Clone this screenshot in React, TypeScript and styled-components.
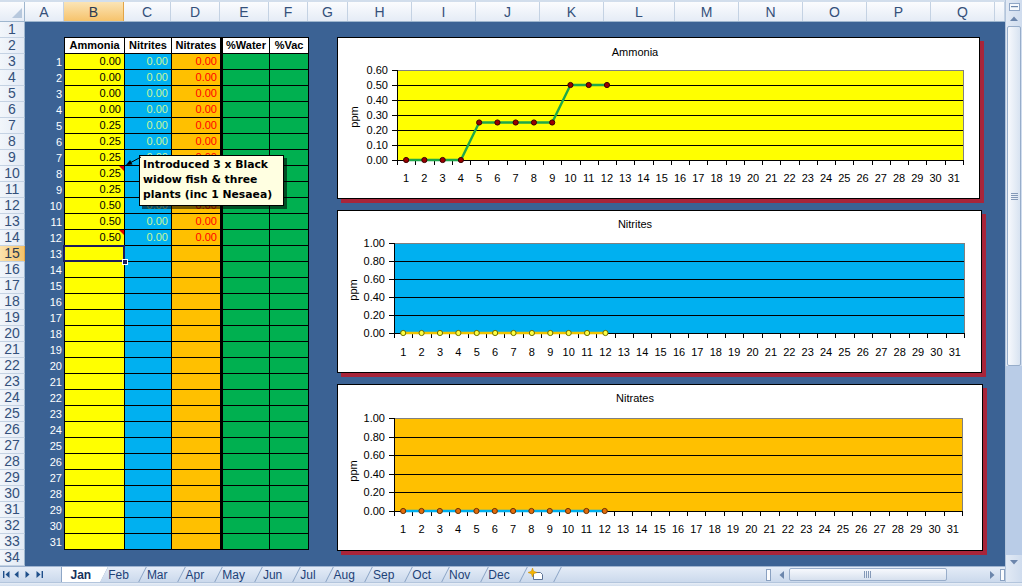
import React from "react";
import styled, { createGlobalStyle, css } from "styled-components";

const GlobalStyle = createGlobalStyle`
  html, body { margin: 0; padding: 0; background: #ffffff; overflow: hidden; }
  body { font-family: "Liberation Sans", Arial, sans-serif; }
  #root { width: 1022px; height: 586px; }
`;

const SHEET = "#3b6294";
const HEAD_LINE = "#9eb6ce";
const SOFT_LINE = "#c4d2e3";

/* ---------- window frame ---------- */
const Window = styled.div`
  width: 1022px;
  height: 586px;
  display: flex;
  flex-direction: column;
  overflow: hidden;
  background: #dbe5f2;
`;
const Upper = styled.div`
  display: flex;
  height: 582px;
  flex: none;
`;
const Workbook = styled.div`
  width: 1005px;
  flex: none;
  display: flex;
  flex-direction: column;
`;
const StatusStrip = styled.div`
  height: 4px;
  flex: none;
  box-sizing: border-box;
  border-top: 1px solid #b3c5dc;
  background: linear-gradient(#e8eef7, #d3dfee);
`;

/* ---------- column header ---------- */
const ColumnHeader = styled.div`
  display: flex;
  height: 22px;
  flex: none;
  box-sizing: border-box;
  border-top: 2px solid #d2deec;
  border-bottom: 1px solid ${HEAD_LINE};
  background: linear-gradient(#fbfcfe, #e5ecf6);
`;
const SelectAll = styled.div`
  width: 25px;
  flex: none;
  box-sizing: border-box;
  border-right: 1px solid ${HEAD_LINE};
  display: flex;
`;
const ColHead = styled.div<{ $w?: number; $active?: boolean }>`
  ${(p) => (p.$w ? css`width: ${p.$w}px; flex: none;` : css`flex: 1;`)}
  box-sizing: border-box;
  border-right: 1px solid ${SOFT_LINE};
  display: flex;
  align-items: center;
  justify-content: center;
  font-size: 14px;
  color: #34507a;
  ${(p) =>
    p.$active &&
    css`
      background: linear-gradient(#fbe4b6, #f6c36c);
      border-right-color: #e2a446;
      color: #2a3a52;
    `}
`;

/* ---------- body ---------- */
const Body = styled.div`
  display: flex;
  height: 544px;
  flex: none;
`;
const RowHeaders = styled.div`
  width: 25px;
  flex: none;
  display: flex;
  flex-direction: column;
  background: linear-gradient(90deg, #f2f6fb, #e1e9f4);
`;
const RowHead = styled.div<{ $active?: boolean }>`
  height: 16px;
  flex: none;
  box-sizing: border-box;
  border-bottom: 1px solid ${SOFT_LINE};
  border-right: 1px solid ${HEAD_LINE};
  font-size: 14px;
  line-height: 15px;
  text-align: center;
  color: #34507a;
  ${(p) =>
    p.$active &&
    css`
      background: linear-gradient(90deg, #fbe2ad, #f5c26a);
      border-right-color: #e2a446;
      color: #2a3a52;
    `}
`;
const Sheet = styled.div`
  flex: 1;
  position: relative;
  display: flex;
  background: ${SHEET};
`;
const DayColumn = styled.div`
  width: 39px;
  flex: none;
  box-sizing: border-box;
  padding-top: 32px;
  display: flex;
  flex-direction: column;
`;
const DayCell = styled.div`
  height: 16px;
  line-height: 16px;
  text-align: right;
  padding-right: 2px;
  color: #ffffff;
  font-size: 11px;
`;
const Table = styled.div`
  margin-top: 15px;
  align-self: flex-start;
  display: grid;
  grid-template-columns: 60px 47px 51px 47px 39px;
  grid-auto-rows: 16px;
  border-top: 1px solid #000;
  border-left: 1px solid #000;
`;
const Cell = styled.div<{
  $bg: string;
  $fg?: string;
  $thick?: boolean;
  $head?: boolean;
  $comment?: boolean;
  $selected?: boolean;
}>`
  position: relative;
  box-sizing: border-box;
  border-right: ${(p) => (p.$thick ? 3 : 1)}px solid #000;
  border-bottom: 1px solid #000;
  background: ${(p) => p.$bg};
  color: ${(p) => p.$fg || "#000"};
  font-size: 11px;
  line-height: 15px;
  white-space: nowrap;
  text-align: ${(p) => (p.$head ? "center" : "right")};
  padding-right: ${(p) => (p.$head ? 0 : 3)}px;
  font-weight: ${(p) => (p.$head ? 700 : 400)};
  ${(p) =>
    p.$comment &&
    css`
      &::after {
        content: "";
        position: absolute;
        top: 0;
        right: 0;
        border-top: 5px solid #e00000;
        border-left: 5px solid transparent;
      }
    `}
  ${(p) =>
    p.$selected &&
    css`
      &::before {
        content: "";
        position: absolute;
        left: -2px;
        top: -1px;
        right: -1px;
        bottom: -1px;
        border: 2px solid #1c1c5c;
        z-index: 2;
      }
      &::after {
        content: "";
        position: absolute;
        right: -4px;
        bottom: -4px;
        width: 4px;
        height: 4px;
        background: #1c1c5c;
        border: 1px solid #ffffff;
        z-index: 3;
      }
    `}
`;

const CommentBox = styled.div`
  position: absolute;
  left: 114px;
  top: 133px;
  width: 145px;
  height: 51px;
  box-sizing: border-box;
  background: #ffffe1;
  border: 1px solid #000;
  box-shadow: 3px 3px 0 rgba(0, 0, 0, 0.55);
  padding: 1px 0 0 3px;
  font-family: "DejaVu Sans", Verdana, sans-serif;
  font-weight: bold;
  font-size: 10.8px;
  line-height: 15px;
  color: #000;
  white-space: nowrap;
  z-index: 5;
`;
const CommentArrow = styled.svg`
  position: absolute;
  left: 95px;
  top: 128px;
  z-index: 6;
  overflow: visible;
`;

/* ---------- charts ---------- */
const ChartPane = styled.div`
  flex: 1;
  display: flex;
  flex-direction: column;
  gap: 11px;
  padding: 15px 0 0 28px;
`;
const ChartFrame = styled.div<{ $w: number; $h: number }>`
  width: ${(p) => p.$w}px;
  height: ${(p) => p.$h}px;
  flex: none;
  box-sizing: border-box;
  background: #ffffff;
  border: 1px solid #000;
  box-shadow: 4px 4px 0 #a8253a;
  display: flex;
`;

type ChartSpec = {
  title: string;
  w: number;
  h: number;
  l: number;
  r: number;
  t: number;
  b: number;
  yMax: number;
  steps: number;
  fill: string;
  values: number[];
  line: string;
  mFill: string;
  mStroke: string;
  titleY: number;
  xLabelY: number;
  ppmX: number;
  ppmY: number;
};

function Chart({ spec }: { spec: ChartSpec }) {
  const { w, h, l, r, t, b, yMax, steps, fill, values, line, mFill, mStroke } = spec;
  const iw = w - 2;
  const ih = h - 2;
  const n = 31;
  const cw = (r - l) / n;
  const yOf = (v: number) => b - (v / yMax) * (b - t);
  const crisp = (v: number) => Math.round(v) + 0.5;
  const pts = values.map((v, i) => [l + (i + 0.5) * cw, yOf(v)] as const);
  const font = { fontFamily: "Liberation Sans, Arial, sans-serif", fontSize: 11, fill: "#000" };
  const yVals = Array.from({ length: steps + 1 }, (_, i) => (yMax / steps) * i);
  return (
    <ChartFrame $w={w} $h={h}>
      <svg width={iw} height={ih} viewBox={`0 0 ${iw} ${ih}`}>
        <text x={297} y={spec.titleY} textAnchor="middle" {...font}>
          {spec.title}
        </text>
        <rect x={l + 0.5} y={crisp(t)} width={r - l} height={Math.round(b) - Math.round(t)} fill={fill} stroke="#808080" strokeWidth={1} shapeRendering="crispEdges" />
        {yVals.slice(1, steps).map((v) => (
          <line key={"g" + v} x1={l} x2={r} y1={crisp(yOf(v))} y2={crisp(yOf(v))} stroke="#000" strokeWidth={1} shapeRendering="crispEdges" />
        ))}
        <line x1={l + 0.5} x2={l + 0.5} y1={t} y2={b + 0.5} stroke="#000" shapeRendering="crispEdges" />
        {yVals.map((v) => (
          <line key={"yt" + v} x1={l - 5} x2={l} y1={crisp(yOf(v))} y2={crisp(yOf(v))} stroke="#000" shapeRendering="crispEdges" />
        ))}
        {yVals.map((v) => (
          <text key={"yl" + v} x={l - 9} y={yOf(v) + 4} textAnchor="end" {...font}>
            {v.toFixed(2)}
          </text>
        ))}
        <line x1={l} x2={r + 1} y1={crisp(b)} y2={crisp(b)} stroke="#000" shapeRendering="crispEdges" />
        {Array.from({ length: n + 1 }, (_, i) => (
          <line key={"xt" + i} x1={crisp(l + i * cw)} x2={crisp(l + i * cw)} y1={b} y2={b + 5} stroke="#000" shapeRendering="crispEdges" />
        ))}
        {Array.from({ length: n }, (_, i) => (
          <text key={"xl" + i} x={l + (i + 0.5) * cw} y={spec.xLabelY} textAnchor="middle" {...font}>
            {i + 1}
          </text>
        ))}
        <text x={spec.ppmX} y={spec.ppmY} textAnchor="middle" transform={`rotate(-90 ${spec.ppmX} ${spec.ppmY})`} dominantBaseline="middle" {...font}>
          ppm
        </text>
        <polyline points={pts.map((p) => p.join(",")).join(" ")} fill="none" stroke={line} strokeWidth={2.4} strokeLinejoin="round" />
        {pts.map((p, i) => (
          <circle key={"m" + i} cx={p[0]} cy={p[1]} r={2.6} fill={mFill} stroke={mStroke} strokeWidth={1} />
        ))}
      </svg>
    </ChartFrame>
  );
}

/* ---------- bottom bar: tabs + horizontal scroll ---------- */
const BottomBar = styled.div`
  height: 16px;
  flex: none;
  display: flex;
  box-sizing: border-box;
  border-top: 1px solid #9fb4d0;
  background: linear-gradient(#e4ecf7, #cbd9ec);
`;
const TabNav = styled.div`
  width: 62px;
  flex: none;
  display: flex;
  align-items: center;
  padding-left: 1px;
  box-sizing: border-box;
  border-right: 1px solid #8ea6c6;
`;
const NavBtn = styled.div<{ $w: number }>`
  width: ${(p) => p.$w}px;
  height: 100%;
  display: flex;
  align-items: center;
  justify-content: center;
`;
const TabStrip = styled.div`
  display: flex;
`;
const SheetTab = styled.div<{ $active?: boolean }>`
  position: relative;
  display: flex;
  align-items: center;
  padding: 0 18px 0 0;
  font-size: 12px;
  color: #1d4278;
  white-space: nowrap;
  &::after {
    content: "";
    position: absolute;
    top: 0;
    bottom: 0;
    right: 3.5px;
    width: 1px;
    background: #8aa3c5;
    transform: skewX(-27deg);
  }
  ${(p) =>
    p.$active &&
    css`
      padding: 0 17px 0 8.5px;
      background: #ffffff;
      font-weight: 700;
      color: #16325c;
      clip-path: polygon(0 0, 100% 0, calc(100% - 8px) 100%, 0 100%);
    `}
`;
const Spacer = styled.div`
  flex: 1;
`;
const HScroll = styled.div`
  width: 239px;
  flex: none;
  display: flex;
  align-items: center;
`;
const SplitHandle = styled.div<{ $ml?: number; $mr?: number }>`
  width: 5px;
  height: 12px;
  flex: none;
  box-sizing: border-box;
  margin-left: ${(p) => p.$ml || 0}px;
  margin-right: ${(p) => p.$mr || 0}px;
  background: #fbfcfe;
  border: 1px solid #8aa1c1;
`;
const ArrowBtnH = styled.div`
  width: 12px;
  height: 13px;
  flex: none;
  display: flex;
  align-items: center;
  justify-content: center;
`;
const HThumb = styled.div`
  width: 158px;
  height: 13px;
  flex: none;
  margin-left: 1px;
  box-sizing: border-box;
  border: 1px solid #98adca;
  border-radius: 2px;
  background: linear-gradient(#f7f9fd, #d6e0ee);
  display: flex;
  align-items: center;
  justify-content: center;
`;
const HTrack = styled.div`
  flex: 1;
  height: 13px;
`;

/* ---------- vertical scroll ---------- */
const VScroll = styled.div`
  width: 17px;
  flex: none;
  display: flex;
  flex-direction: column;
  align-items: center;
  box-sizing: border-box;
  border-left: 1px solid #b3c5dc;
  background: linear-gradient(90deg, #e2eaf5, #cfdcee);
`;
const VSplit = styled.div`
  width: 11px;
  height: 8px;
  margin-top: 3px;
  flex: none;
  box-sizing: border-box;
  border: 1px solid #8fa6c6;
  background: #f6f9fd;
  display: flex;
  align-items: center;
  justify-content: center;
`;
const ArrowBtnV = styled.div`
  height: 15px;
  width: 100%;
  flex: none;
  display: flex;
  align-items: center;
  justify-content: center;
`;
const VThumb = styled.div`
  width: 14px;
  height: 340px;
  flex: none;
  box-sizing: border-box;
  border: 1px solid #97adca;
  border-radius: 2px;
  background: linear-gradient(90deg, #f7f9fd, #d8e3f1);
  display: flex;
  align-items: center;
  justify-content: center;
`;
const VTrack = styled.div`
  flex: 1;
  width: 100%;
  background: #b9cce7;
`;
const VCorner = styled.div`
  height: 12px;
  width: 100%;
  flex: none;
`;

/* ---------- data ---------- */
const COLS: [string, number][] = [
  ["A", 39], ["B", 60], ["C", 47], ["D", 49], ["E", 49], ["F", 39], ["G", 40],
  ["H", 64], ["I", 64], ["J", 64], ["K", 64], ["L", 71], ["M", 64], ["N", 64],
  ["O", 64], ["P", 64], ["Q", 64],
];
const AMMONIA = [0, 0, 0, 0, 0.25, 0.25, 0.25, 0.25, 0.25, 0.5, 0.5, 0.5];
const ZEROS = Array.from({ length: 12 }, () => 0);
const DAYS = Array.from({ length: 31 }, (_, i) => i + 1);
const TABS = ["Jan", "Feb", "Mar", "Apr", "May", "Jun", "Jul", "Aug", "Sep", "Oct", "Nov", "Dec"];

const CHARTS: ChartSpec[] = [
  {
    title: "Ammonia", w: 643, h: 162, l: 59, r: 625, t: 32, b: 122, yMax: 0.6, steps: 6,
    fill: "#ffff00", values: AMMONIA, line: "#1ea84a", mFill: "#9a0000", mStroke: "#3d0000",
    titleY: 17.5, xLabelY: 144, ppmX: 17, ppmY: 79,
  },
  {
    title: "Nitrites", w: 645, h: 163, l: 56, r: 626, t: 32, b: 122, yMax: 1, steps: 5,
    fill: "#00b0f0", values: ZEROS, line: "#f0c400", mFill: "#ffff40", mStroke: "#6b6b00",
    titleY: 17, xLabelY: 145, ppmX: 16, ppmY: 79,
  },
  {
    title: "Nitrates", w: 646, h: 167, l: 56, r: 624, t: 33, b: 126, yMax: 1, steps: 5,
    fill: "#ffc000", values: ZEROS, line: "#00b0f0", mFill: "#e36c09", mStroke: "#6b3000",
    titleY: 17, xLabelY: 148, ppmX: 16, ppmY: 86,
  },
];

const NAV = "#1f4f8a";

export default function App() {
  return (
    <>
      <GlobalStyle />
      <Window>
        <Upper>
          <Workbook>
            <ColumnHeader>
              <SelectAll>
                <svg width="24" height="19" viewBox="0 0 24 19">
                  <polygon points="12,16 22,16 22,6" fill="#b7c8dd" />
                </svg>
              </SelectAll>
              {COLS.map(([c, w]) => (
                <ColHead key={c} $w={w} $active={c === "B"}>
                  {c}
                </ColHead>
              ))}
              <ColHead />
            </ColumnHeader>

            <Body>
              <RowHeaders>
                {Array.from({ length: 34 }, (_, i) => (
                  <RowHead key={i} $active={i + 1 === 15}>
                    {i + 1}
                  </RowHead>
                ))}
              </RowHeaders>
              <Sheet>
                <DayColumn>
                  {DAYS.map((d) => (
                    <DayCell key={d}>{d}</DayCell>
                  ))}
                </DayColumn>
                <Table>
                  <Cell $bg="#fff" $head>Ammonia</Cell>
                  <Cell $bg="#fff" $head>Nitrites</Cell>
                  <Cell $bg="#fff" $head $thick>Nitrates</Cell>
                  <Cell $bg="#fff" $head>%Water</Cell>
                  <Cell $bg="#fff" $head>%Vac</Cell>
                  {DAYS.map((d) => {
                    const has = d <= 12;
                    return (
                      <React.Fragment key={d}>
                        <Cell $bg="#ffff00" $comment={d === 8 || d === 12} $selected={d === 13}>
                          {has ? AMMONIA[d - 1].toFixed(2) : ""}
                        </Cell>
                        <Cell $bg="#00b0f0" $fg="#c8f79c">{has ? "0.00" : ""}</Cell>
                        <Cell $bg="#ffc000" $fg="#ff0000" $thick>{has ? "0.00" : ""}</Cell>
                        <Cell $bg="#00b050" />
                        <Cell $bg="#00b050" />
                      </React.Fragment>
                    );
                  })}
                </Table>
                <ChartPane>
                  {CHARTS.map((c) => (
                    <Chart key={c.title} spec={c} />
                  ))}
                </ChartPane>

                <CommentArrow width="30" height="20" viewBox="0 0 30 20">
                  <line x1="21" y1="7" x2="11" y2="12.4" stroke="#000" strokeWidth="1" />
                  <polygon points="6,15 12.5,14.4 10.1,10" fill="#000" />
                </CommentArrow>
                <CommentBox>
                  Introduced 3 x Black
                  <br />
                  widow fish &amp; three
                  <br />
                  plants (inc 1 Nesaea)
                </CommentBox>
              </Sheet>
            </Body>

            <BottomBar>
              <TabNav>
                <NavBtn $w={10}>
                  <svg width="9" height="9" viewBox="0 0 9 9">
                    <rect x="1" y="1" width="1.4" height="7" fill={NAV} />
                    <polygon points="7.5,1 7.5,8 3.5,4.5" fill={NAV} />
                  </svg>
                </NavBtn>
                <NavBtn $w={10}>
                  <svg width="9" height="9" viewBox="0 0 9 9">
                    <polygon points="6.5,1 6.5,8 2.5,4.5" fill={NAV} />
                  </svg>
                </NavBtn>
                <NavBtn $w={12}>
                  <svg width="9" height="9" viewBox="0 0 9 9">
                    <polygon points="2.5,1 2.5,8 6.5,4.5" fill={NAV} />
                  </svg>
                </NavBtn>
                <NavBtn $w={12}>
                  <svg width="9" height="9" viewBox="0 0 9 9">
                    <polygon points="1.5,1 1.5,8 5.5,4.5" fill={NAV} />
                    <rect x="6.6" y="1" width="1.4" height="7" fill={NAV} />
                  </svg>
                </NavBtn>
              </TabNav>
              <TabStrip>
                {TABS.map((t) => (
                  <SheetTab key={t} $active={t === "Jan"}>
                    {t}
                  </SheetTab>
                ))}
                <SheetTab>
                  <svg width="16" height="13" viewBox="0 0 16 13">
                    <path d="M5.5 4.5 H12.5 L14.5 6.5 V11.5 H5.5 Z" fill="#ffffff" stroke="#5d7396" />
                    <polygon points="4.5,0 5.6,3.2 9,4.5 5.6,5.8 4.5,9 3.4,5.8 0,4.5 3.4,3.2" fill="#f5b400" stroke="#c98a00" strokeWidth="0.5" />
                  </svg>
                </SheetTab>
              </TabStrip>
              <Spacer />
              <HScroll>
                <SplitHandle $mr={5} />
                <ArrowBtnH>
                  <svg width="6" height="8" viewBox="0 0 6 8">
                    <polygon points="5,0 5,8 0.5,4" fill="#6c86ac" />
                  </svg>
                </ArrowBtnH>
                <HThumb>
                  <svg width="9" height="7" viewBox="0 0 9 7">
                    {[0.5, 2.5, 4.5, 6.5].map((x) => (
                      <line key={x} x1={x} x2={x} y1="0" y2="7" stroke="#8499b8" />
                    ))}
                  </svg>
                </HThumb>
                <HTrack />
                <ArrowBtnH>
                  <svg width="6" height="8" viewBox="0 0 6 8">
                    <polygon points="1,0 1,8 5.5,4" fill="#6c86ac" />
                  </svg>
                </ArrowBtnH>
                <SplitHandle $ml={2} />
              </HScroll>
            </BottomBar>
          </Workbook>

          <VScroll>
            <VSplit>
              <svg width="7" height="2" viewBox="0 0 7 2">
                <rect x="0" y="0" width="7" height="1.2" fill="#6c86ac" />
              </svg>
            </VSplit>
            <ArrowBtnV>
              <svg width="8" height="5" viewBox="0 0 8 5">
                <polygon points="0,5 8,5 4,0.5" fill="#6c86ac" />
              </svg>
            </ArrowBtnV>
            <VThumb>
              <svg width="7" height="7" viewBox="0 0 7 7">
                {[0.5, 2.5, 4.5, 6.5].map((y) => (
                  <line key={y} x1="0" x2="7" y1={y} y2={y} stroke="#8499b8" />
                ))}
              </svg>
            </VThumb>
            <VTrack />
            <ArrowBtnV>
              <svg width="8" height="5" viewBox="0 0 8 5">
                <polygon points="0,0 8,0 4,4.5" fill="#6c86ac" />
              </svg>
            </ArrowBtnV>
            <VCorner />
          </VScroll>
        </Upper>
        <StatusStrip />
      </Window>
    </>
  );
}
